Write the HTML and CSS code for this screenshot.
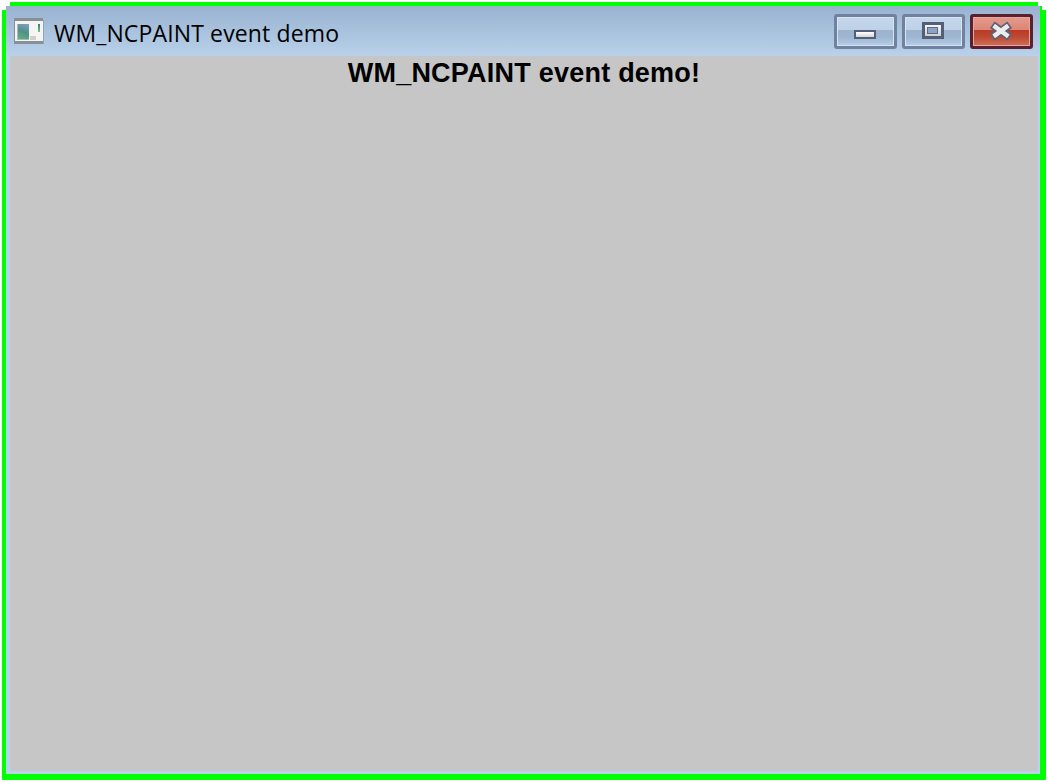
FILE: index.html
```html
<!DOCTYPE html>
<html lang="en">
<head>
<meta charset="utf-8">
<title>WM_NCPAINT event demo</title>
<link rel="stylesheet" href="styles.css">
</head>
<body>
<div class="window">
  <header class="titlebar">
    <svg class="app-icon" width="30" height="26" viewBox="0 0 30 26" aria-hidden="true">
      <defs>
        <linearGradient id="screen" x1="0.6" y1="0" x2="0.3" y2="1">
          <stop offset="0" stop-color="#7f9cc0"/>
          <stop offset="0.5" stop-color="#4f9288"/>
          <stop offset="1" stop-color="#5cb078"/>
        </linearGradient>
        <linearGradient id="bar" x1="0" y1="0" x2="0" y2="1">
          <stop offset="0" stop-color="#3d6fa8"/>
          <stop offset="1" stop-color="#7fc06a"/>
        </linearGradient>
      </defs>
      <rect x="29" y="2" width="1" height="24" fill="#8fa5bf"/>
      <rect x="0" y="0" width="29" height="26" fill="#8a8f96"/>
      <rect x="1" y="3" width="28" height="20" fill="#f4f4f2"/>
      <rect x="3" y="6" width="12" height="16" fill="#b3b3c6"/>
      <rect x="4" y="6" width="11" height="15" fill="url(#screen)"/>
      <rect x="16" y="18" width="6" height="4" fill="#cfcfcd"/>
      <rect x="24" y="6" width="2" height="8" fill="url(#bar)"/>
    </svg>
    <span class="title">WM_NCPAINT event demo</span>
    <div class="controls">
      <button class="ctl" type="button" aria-label="Minimize"><span class="glyph-min"></span></button>
      <button class="ctl" type="button" aria-label="Maximize"><span class="glyph-max"></span></button>
      <button class="ctl ctl-close" type="button" aria-label="Close">
        <svg width="24" height="20" viewBox="0 0 24 20" aria-hidden="true">
          <path class="x-outer" d="M6.5 6 L17.5 14 M17.5 6 L6.5 14"/>
          <path class="x-inner" d="M6.5 6 L17.5 14 M17.5 6 L6.5 14"/>
        </svg>
      </button>
    </div>
  </header>
  <main class="client">
    <h1 class="heading">WM_NCPAINT event demo!</h1>
  </main>
</div>
</body>
</html>
```
FILE: styles.css
```css
* { box-sizing: border-box; }

html, body {
  margin: 0;
  height: 100%;
  background: #ffffff;
  overflow: hidden;
}

body { padding: 2px; }

.window {
  width: 1044px;
  height: 778px;
  display: flex;
  flex-direction: column;
  border-style: solid;
  border-color: #00ff00;
  border-width: 4px 6px 6px 4px;
  background: #b9d1ea;
  clip-path: polygon(
    8px 0, calc(100% - 8px) 0, calc(100% - 8px) 4px, calc(100% - 4px) 4px,
    calc(100% - 4px) 8px, 100% 8px, 100% 100%, 0 100%, 0 8px, 4px 8px, 4px 4px, 8px 4px
  );
}

.titlebar {
  flex: none;
  height: 50px;
  display: flex;
  align-items: flex-start;
  padding: 8px 7px 0 8px;
  background: linear-gradient(#98b2d0, #b9d1ea);
}

.app-icon {
  flex: none;
  margin-top: 4px;
}

.title {
  margin-left: 10px;
  margin-top: 4px;
  font: 23px/30px "Open Sans", sans-serif;
  letter-spacing: 0.14px;
  color: #000000;
  white-space: nowrap;
}

.controls {
  margin-left: auto;
  display: flex;
  gap: 5px;
}

.ctl {
  width: 63px;
  height: 35px;
  padding: 0;
  display: flex;
  align-items: center;
  justify-content: center;
  border: 3px solid #7182a0;
  border-radius: 3px;
  box-shadow: inset 0 0 0 1px #d6e3f1;
  background: linear-gradient(#c5d7eb 0, #bdd1e7 44%, #9cb3cf 45%, #9fb6d2 70%, #b7cfe8 100%);
}

.ctl-close {
  border-color: #5a2030;
  box-shadow: inset 0 0 0 1px #e3a79b;
  background: linear-gradient(#e59a8b 0, #dc8676 44%, #b93a25 45%, #bd4a34 70%, #d0705a 100%);
}

.glyph-min {
  width: 22px;
  height: 9px;
  margin-top: 5px;
  margin-right: 2px;
  border: 2px solid #555e78;
  background: linear-gradient(#ffffff, #d4d4d4);
}

.glyph-max {
  width: 22px;
  height: 17px;
  margin-top: -2px;
  margin-right: 2px;
  border: 3px solid #555e78;
  background: linear-gradient(#f6f6f6, #cfcfcf);
  display: flex;
  align-items: center;
  justify-content: center;
}

.glyph-max::before {
  content: "";
  width: 9px;
  height: 5px;
  border: 1px solid #5a6a88;
  background: #8ca4c4;
}

.ctl-close svg {
  display: block;
  margin-top: -2px;
  margin-right: 2px;
}

.x-outer, .x-inner {
  fill: none;
  stroke-linecap: square;
}

.x-outer { stroke: #5a6379; stroke-width: 8; }
.x-inner { stroke: #ececec; stroke-width: 4.5; }

.client {
  flex: 1;
  margin: 0 2px 3px 4px;
  padding-top: 1px;
  background: #c6c6c6;
}

.heading {
  margin: 0;
  text-align: center;
  font: bold 27px/32px "Liberation Sans", sans-serif;
  letter-spacing: 0.23px;
  color: #000000;
}
```
